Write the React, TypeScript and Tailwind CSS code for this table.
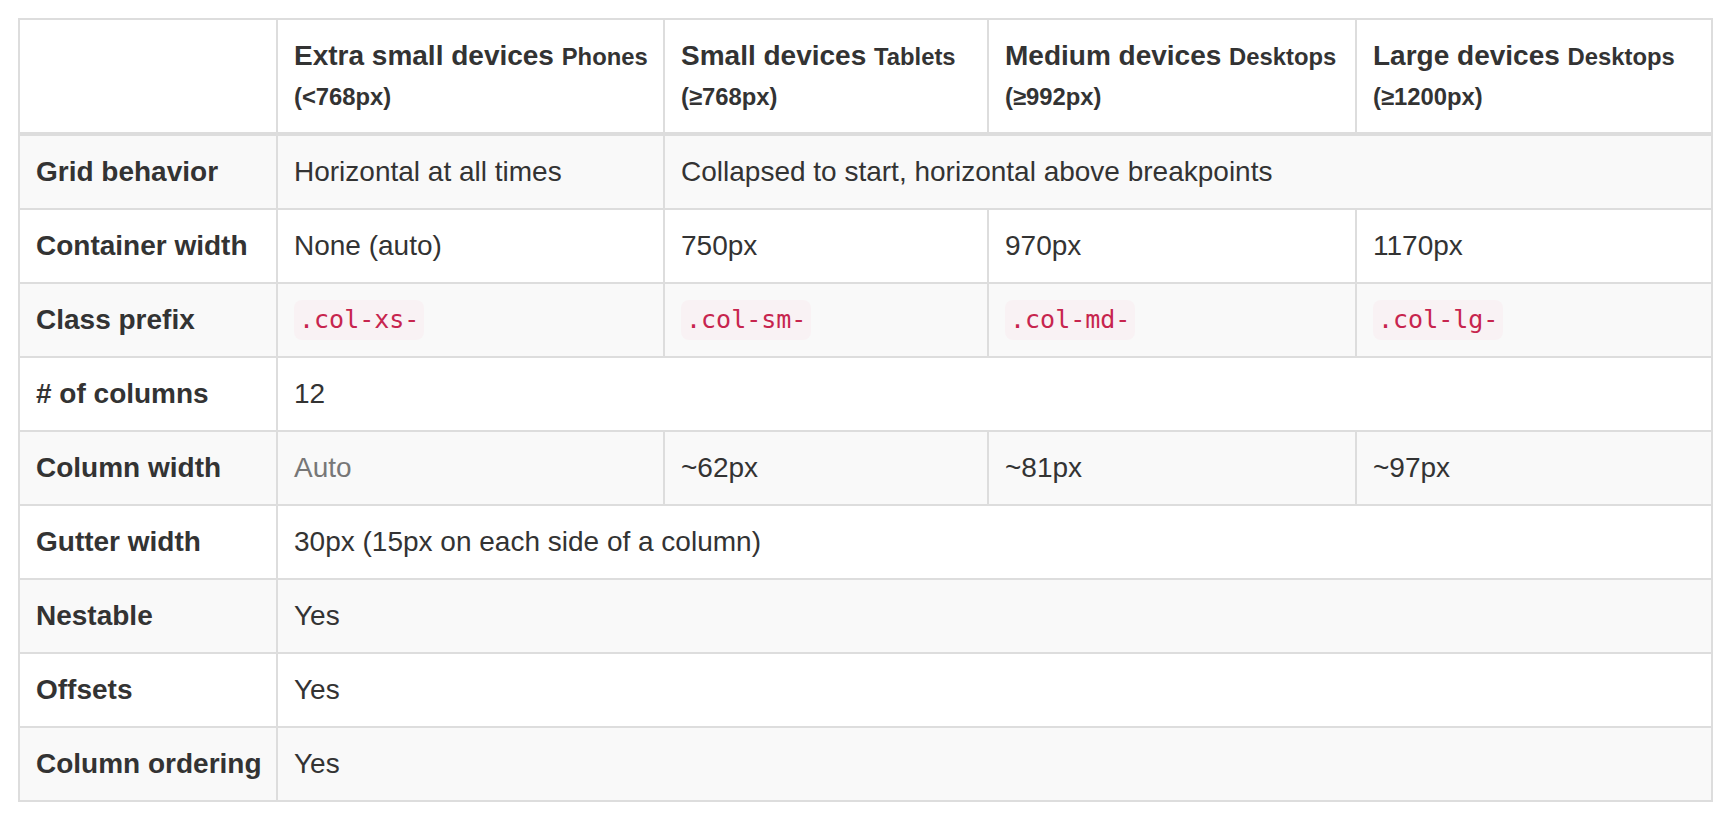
const rows: { label: string; cells: { text: string; span?: number; code?: boolean; muted?: boolean }[] }[] = [
  {
    label: "Grid behavior",
    cells: [{ text: "Horizontal at all times" }, { text: "Collapsed to start, horizontal above breakpoints", span: 3 }],
  },
  {
    label: "Container width",
    cells: [{ text: "None (auto)" }, { text: "750px" }, { text: "970px" }, { text: "1170px" }],
  },
  {
    label: "Class prefix",
    cells: [
      { text: ".col-xs-", code: true },
      { text: ".col-sm-", code: true },
      { text: ".col-md-", code: true },
      { text: ".col-lg-", code: true },
    ],
  },
  { label: "# of columns", cells: [{ text: "12", span: 4 }] },
  {
    label: "Column width",
    cells: [{ text: "Auto", muted: true }, { text: "~62px" }, { text: "~81px" }, { text: "~97px" }],
  },
  { label: "Gutter width", cells: [{ text: "30px (15px on each side of a column)", span: 4 }] },
  { label: "Nestable", cells: [{ text: "Yes", span: 4 }] },
  { label: "Offsets", cells: [{ text: "Yes", span: 4 }] },
  { label: "Column ordering", cells: [{ text: "Yes", span: 4 }] },
];

const heads = [
  { main: "Extra small devices", sub: "Phones", size: "(<768px)" },
  { main: "Small devices", sub: "Tablets", size: "(≥768px)" },
  { main: "Medium devices", sub: "Desktops", size: "(≥992px)" },
  { main: "Large devices", sub: "Desktops", size: "(≥1200px)" },
];

export default function App() {
  return (
    <div className="min-h-screen bg-white pt-[18px] pl-[18px] text-[#333] font-['Liberation_Sans',Arial,sans-serif] text-[28px] leading-[40px]">
      <table className="table-fixed border-collapse w-[1694px] border-2 border-[#ddd]">
        <colgroup>
          <col className="w-[258px]" />
          <col className="w-[387px]" />
          <col className="w-[324px]" />
          <col className="w-[368px]" />
          <col className="w-[356px]" />
        </colgroup>
        <thead>
          <tr>
            <th className="border-2 border-b-4 border-[#ddd] p-4 align-bottom" />
            {heads.map((h) => (
              <th key={h.main} className="border-2 border-b-4 border-[#ddd] p-4 align-bottom text-left font-bold whitespace-nowrap">
                {h.main} <small className="text-[23.8px] leading-none">{h.sub}</small>
                <br />
                <small className="text-[23.8px] leading-none">{h.size}</small>
              </th>
            ))}
          </tr>
        </thead>
        <tbody>
          {rows.map((r, i) => (
            <tr key={r.label} className={i % 2 === 0 ? "bg-[#f9f9f9]" : "bg-white"}>
              <th className="border-2 border-[#ddd] p-4 text-left font-bold whitespace-nowrap">{r.label}</th>
              {r.cells.map((c, j) => (
                <td
                  key={j}
                  colSpan={c.span ?? 1}
                  className={"border-2 border-[#ddd] p-4 whitespace-nowrap " + (c.muted ? "text-[#777]" : "")}
                >
                  {c.code ? (
                    <code className="inline-block align-top rounded-lg bg-[#f9f2f4] px-[5px] py-[4px] font-['DejaVu_Sans_Mono',Menlo,monospace] text-[25px] leading-[32px] text-[#c7254e]">
                      {c.text}
                    </code>
                  ) : (
                    c.text
                  )}
                </td>
              ))}
            </tr>
          ))}
        </tbody>
      </table>
    </div>
  );
}
